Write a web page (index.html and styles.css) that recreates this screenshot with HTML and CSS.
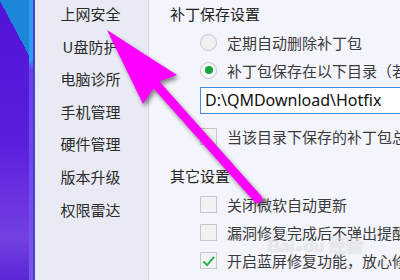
FILE: index.html
```html
<!DOCTYPE html>
<html lang="zh-CN">
<head>
  <meta charset="UTF-8">
  <title>补丁设置</title>
  <link rel="stylesheet" href="styles.css">
</head>
<body>

  <div class="window">
    <div class="skin"></div>
    <div class="skin-edge"></div>

    <ul class="side-menu">
      <li>上网安全</li>
      <li>U盘防护</li>
      <li>电脑诊所</li>
      <li>手机管理</li>
      <li>硬件管理</li>
      <li>版本升级</li>
      <li>权限雷达</li>
    </ul>

    <div class="settings">
      <div class="group-title">补丁保存设置</div>
      <div class="option"><span class="radio"></span>定期自动删除补丁包</div>
      <div class="option"><span class="radio checked"></span>补丁包保存在以下目录（若目录不存在将自动创建）</div>
      <div class="path-box">D:\QMDownload\Hotfix</div>
      <div class="option option-gap"><span class="check"></span>当该目录下保存的补丁包总大小超过</div>

      <div class="group-title group-gap">其它设置</div>
      <div class="option"><span class="check"></span>关闭微软自动更新</div>
      <div class="option"><span class="check"></span>漏洞修复完成后不弹出提醒窗口</div>
      <div class="option">
        <span class="check">
          <svg width="16" height="16" viewBox="0 0 16 16"><polyline points="2.5,8.5 6.5,12.5 14,3.5" fill="none" stroke="#23b04a" stroke-width="2"/></svg>
        </span>开启蓝屏修复功能，放心修复漏洞
      </div>
    </div>
  </div>

  <!-- pointer drawn over the screenshot -->
  <svg class="pointer" width="400" height="280" viewBox="0 0 400 280">
    <g class="pointer-shape">
      <polygon points="107,30 177,75 158,82 143,104" fill="#ff00ff"/>
      <line x1="152" y1="80" x2="258" y2="199" stroke="#ff00ff" stroke-width="9" stroke-linecap="round"/>
    </g>
  </svg>

  <div class="watermark">Bai<span class="paw">&#9679;</span>du 经验</div>

</body>
</html>
```

FILE: styles.css
```css
body {
    margin: 0;
    width: 400px;
    height: 280px;
    overflow: hidden;
    font-family: "Noto Sans CJK SC", "Noto Sans", sans-serif;
    position: relative;
}

.window {
    display: flex;
    height: 280px;
    background-color: #f4f5fc;
}

.skin {
    width: 29px;
    background:
        linear-gradient(62deg, transparent 131px, #1c87d8 131px),
        linear-gradient(to bottom, #5212d8 0%, #5a1edc 50%, #7440e2 85%, #5a26d6 100%);
}

.skin-edge {
    width: 4px;
    background: linear-gradient(to bottom, #2c9cf2 0px, #2c9cf2 60px, #6a3cf2 70px, #7a54ee 100%);
    border-right: 2px solid #4a40cc;
}

.side-menu {
    list-style-type: none;
    margin: -2px 0 0 0;
    padding: 0;
    width: 113px;
    background-color: #e9eaf4;
    border-right: 1px solid #d4d5df;
}

.side-menu li {
    height: 32.6px;
    line-height: 32.6px;
    text-align: center;
    font-size: 15px;
    color: #2a2a2a;
    padding-right: 2px;
}

.settings {
    flex: 1;
    padding-left: 21px;
    overflow: hidden;
}

.group-title {
    height: 28px;
    line-height: 28px;
    font-size: 15px;
    color: #222;
    white-space: nowrap;
}

.group-gap {
    margin-top: 12px;
}

.option {
    display: flex;
    align-items: center;
    height: 28px;
    padding-left: 30px;
    font-size: 15px;
    color: #3a3a3a;
    white-space: nowrap;
}

.option-gap {
    margin-top: 8px;
}

.radio {
    width: 15px;
    height: 15px;
    border: 1px solid #c4c4c8;
    border-radius: 50%;
    background-color: #f0f0f2;
    margin-right: 10px;
    display: flex;
    align-items: center;
    justify-content: center;
    flex-shrink: 0;
}

.radio.checked {
    background-color: #f7f7f9;
}

.radio.checked::after {
    content: "";
    width: 8px;
    height: 8px;
    border-radius: 50%;
    background-color: #12a63c;
}

.check {
    width: 15px;
    height: 15px;
    border: 1px solid #c6c6cc;
    background-color: #f2f2f5;
    margin-right: 10px;
    flex-shrink: 0;
    display: flex;
}

.path-box {
    margin: 3px 0 0 30px;
    height: 25px;
    line-height: 25px;
    width: 240px;
    border: 1px solid #3d8fe2;
    background-color: white;
    padding-left: 4px;
    font-family: "Noto Sans", sans-serif;
    font-size: 16px;
    color: #111;
    white-space: nowrap;
}

.pointer {
    position: absolute;
    top: 0;
    left: 0;
    pointer-events: none;
}

.pointer-shape {
    filter: drop-shadow(2px 3px 2px rgba(0, 0, 0, 0.45));
}

.watermark {
    position: absolute;
    left: 268px;
    top: 232px;
    font-family: "Liberation Sans", sans-serif;
    font-size: 17px;
    font-weight: bold;
    color: rgba(255, 255, 255, 0.55);
    text-shadow: 0 0 1px rgba(120, 120, 120, 0.35);
    pointer-events: none;
}

.watermark .paw {
    font-size: 12px;
    margin: 0 1px;
}
```
